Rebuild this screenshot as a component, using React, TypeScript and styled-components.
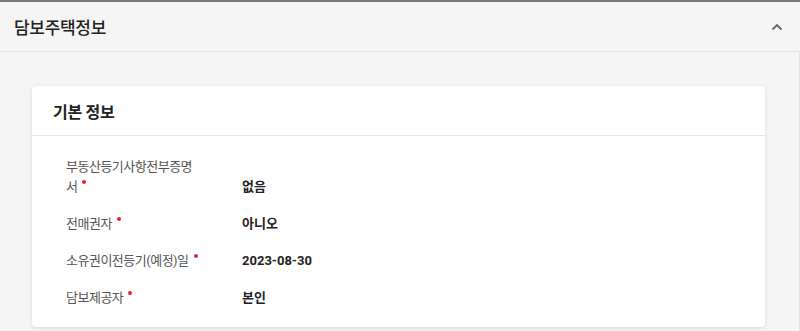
import React from "react";
import styled, { createGlobalStyle } from "styled-components";

const GlobalStyle = createGlobalStyle`
  html, body {
    margin: 0;
    padding: 0;
    background: #f5f5f5;
  }
  body {
    font-family: Roboto, "Noto Sans CJK KR", "Noto Sans", sans-serif;
    color: #222;
  }
`;

interface InfoItem {
  label: string;
  value: string;
  required?: boolean;
}

const items: InfoItem[] = [
  { label: "부동산등기사항전부증명서", value: "없음", required: true },
  { label: "전매권자", value: "아니오", required: true },
  { label: "소유권이전등기(예정)일", value: "2023-08-30", required: true },
  { label: "담보제공자", value: "본인", required: true },
];

const ChevronUp = () => (
  <svg width="12" height="8" viewBox="0 0 12 8" fill="none">
    <path d="M1.5 6.5L6 2L10.5 6.5" stroke="#666" strokeWidth="1.8" />
  </svg>
);

const App = () => {
  return (
    <>
      <GlobalStyle />
      <Section>
        <SectionHeader>
          <SectionTitle>담보주택정보</SectionTitle>
          <ToggleBtn type="button" aria-label="접기">
            <ChevronUp />
          </ToggleBtn>
        </SectionHeader>
        <SectionBody>
          <Card>
            <CardHeader>
              <CardTitle>기본 정보</CardTitle>
            </CardHeader>
            <CardBody>
              {items.map((item) => (
                <Row key={item.label}>
                  <Label>
                    {item.label}
                    {item.required && <RequiredDot />}
                  </Label>
                  <Value>{item.value}</Value>
                </Row>
              ))}
            </CardBody>
          </Card>
        </SectionBody>
      </Section>
    </>
  );
};

const Section = styled.section`
  width: 800px;
  height: 331px;
  border-top: 2px solid #7a7a7a;
  box-sizing: border-box;
  background: #f5f5f5;
  overflow: hidden;
`;
const SectionHeader = styled.div`
  height: 49px;
  display: flex;
  align-items: center;
  justify-content: space-between;
  padding: 0 14px;
  border-bottom: 1px solid #e2e2e2;
`;
const SectionTitle = styled.h2`
  margin: 0;
  font-size: 17px;
  font-weight: 500;
  letter-spacing: -0.3px;
  color: #222;
`;
const ToggleBtn = styled.button`
  border: 0;
  background: none;
  padding: 0;
  margin-right: 3px;
  display: flex;
  align-items: center;
  cursor: pointer;
`;
const SectionBody = styled.div`
  padding: 34px 34px 0 32px;
  border-right: 1px solid #e2e2e2;
  height: 100%;
`;
const Card = styled.div`
  background: #fff;
  border-radius: 4px;
  box-shadow: 0 1px 4px rgba(0, 0, 0, 0.12);
`;
const CardHeader = styled.div`
  height: 49px;
  display: flex;
  align-items: center;
  padding: 0 21px;
  border-bottom: 1px solid #e6e6e6;
`;
const CardTitle = styled.h3`
  margin: 0;
  font-size: 16px;
  font-weight: 700;
  letter-spacing: -0.3px;
  color: #222;
`;
const CardBody = styled.div`
  display: flex;
  flex-direction: column;
  gap: 17px;
  padding: 21px 34px 19px;
`;
const Row = styled.div`
  display: flex;
  align-items: flex-end;
  font-size: 13px;
  line-height: 20px;
`;
const Label = styled.div`
  width: 134px;
  margin-right: 42px;
  color: #555;
  letter-spacing: -0.5px;
`;
const RequiredDot = styled.span`
  display: inline-block;
  width: 4px;
  height: 4px;
  border-radius: 50%;
  background: #f01e2c;
  margin-left: 5px;
  vertical-align: top;
  margin-top: 3px;
`;
const Value = styled.div`
  font-weight: 700;
  color: #222;
`;

export default App;
